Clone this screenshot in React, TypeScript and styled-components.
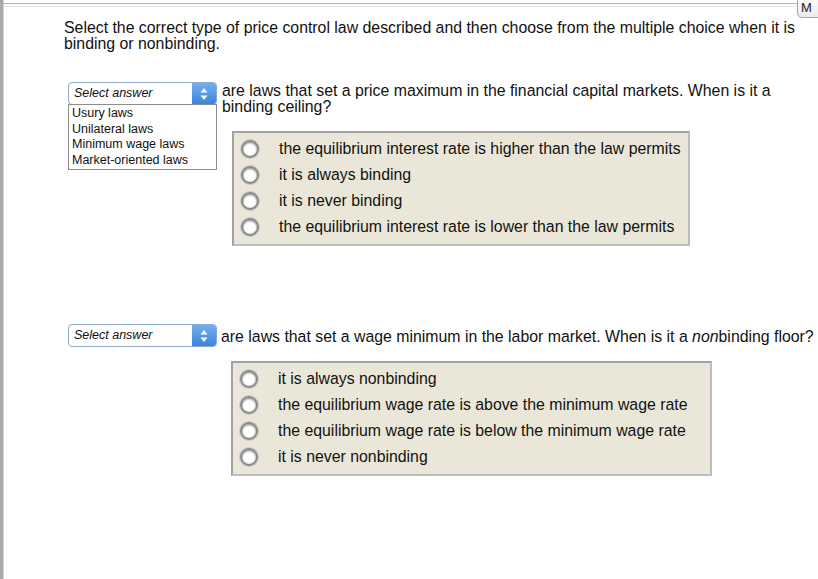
import React from "react";
import styled, { createGlobalStyle } from "styled-components";

const GlobalStyle = createGlobalStyle`
  html, body {
    margin: 0;
    padding: 0;
    background: #fff;
    font-family: "Liberation Sans", Arial, sans-serif;
    color: #111;
  }
`;

const Frame = styled.div`
  position: relative;
  width: 818px;
  height: 579px;
  box-sizing: border-box;
  border-left: 3px solid #a9a9a9;
  box-shadow: inset 1px 0 0 #d4d4d4;
  overflow: hidden;
  > .topline {
    height: 2px;
    margin-top: 3px;
    width: 797px;
    border-top: 1px solid #b5b5b5;
    border-bottom: 1px solid #e4e4e4;
  }
`;

const CornerButton = styled.div`
  position: absolute;
  top: -1px;
  right: -6px;
  width: 22px;
  height: 17px;
  border: 1px solid #a6a6a6;
  border-radius: 0 0 0 5px;
  background: linear-gradient(#fafafa, #ececec);
  font-size: 13px;
  line-height: 16px;
  padding-left: 3px;
  color: #222;
`;

const Intro = styled.p`
  margin: 13px 0 0 61px;
  font-size: 15.85px;
  line-height: 16px;
`;

const Question = styled.div<{ $top: number; $indent: number }>`
  display: flex;
  align-items: flex-start;
  margin: ${(p) => p.$top}px 0 0 ${(p) => p.$indent}px;
`;

const SelectWrap = styled.div`
  position: relative;
  flex: 0 0 149px;
`;

const SelectBox = styled.div`
  display: flex;
  height: 21px;
  border: 1px solid #8fa9c9;
  border-radius: 4px;
  background: #fff;
  overflow: hidden;
  > .label {
    flex: 1;
    font-size: 12.5px;
    font-style: italic;
    line-height: 21px;
    padding-left: 5px;
    color: #111;
  }
  > .arrow {
    width: 24px;
    background: linear-gradient(#72aef0, #3c84dc);
    display: flex;
    align-items: center;
    justify-content: center;
  }
`;

const DropList = styled.ul`
  position: absolute;
  top: 22px;
  left: 0;
  width: 147px;
  margin: 0;
  padding: 1px 0 1px;
  list-style: none;
  background: #fff;
  border: 1px solid #8c8c8c;
  > li {
    font-size: 12.5px;
    line-height: 15.6px;
    padding-left: 3px;
  }
`;

const Body = styled.div<{ $gap: number }>`
  flex: 1;
  padding-left: ${(p) => p.$gap}px;
`;

const Prompt = styled.div<{ $offset: number }>`
  font-size: 15.85px;
  line-height: 16px;
  margin-top: ${(p) => p.$offset}px;
  white-space: nowrap;
`;

const Choices = styled.div<{ $width: number }>`
  width: ${(p) => p.$width}px;
  margin: 16px 0 0 10px;
  box-sizing: border-box;
  background: #ebe7d8;
  border: 2px solid #a2a2a2;
  border-right-color: #bdbdbd;
  border-bottom-color: #bdbdbd;
  padding: 3px 0 4px 7px;
`;

const Choice = styled.div`
  display: flex;
  align-items: center;
  height: 26px;
  font-size: 15.85px;
  > .text {
    margin-left: 20px;
  }
`;

const Radio = styled.span`
  flex: 0 0 auto;
  width: 14px;
  height: 14px;
  border-radius: 50%;
  background: radial-gradient(circle at 50% 40%, #fff 55%, #eee 75%);
  border: 2px solid #8a8a8a;
  box-shadow: 0 0 0 1px #c8c8c8, inset 0 1px 2px #888;
`;

const Arrows = () => (
  <svg width="10" height="14" viewBox="0 0 10 14">
    <path d="M5 1 L8.5 5.5 L1.5 5.5 Z" fill="#fff" />
    <path d="M5 13 L8.5 8.5 L1.5 8.5 Z" fill="#fff" />
  </svg>
);

const Select: React.FC<{ open?: boolean; options?: string[] }> = ({
  open,
  options,
}) => (
  <SelectWrap>
    <SelectBox>
      <span className="label">Select answer</span>
      <span className="arrow">
        <Arrows />
      </span>
    </SelectBox>
    {open && options && (
      <DropList>
        {options.map((o) => (
          <li key={o}>{o}</li>
        ))}
      </DropList>
    )}
  </SelectWrap>
);

const laws = [
  "Usury laws",
  "Unilateral laws",
  "Minimum wage laws",
  "Market-oriented laws",
];

const q1 = [
  "the equilibrium interest rate is higher than the law permits",
  "it is always binding",
  "it is never binding",
  "the equilibrium interest rate is lower than the law permits",
];

const q2 = [
  "it is always nonbinding",
  "the equilibrium wage rate is above the minimum wage rate",
  "the equilibrium wage rate is below the minimum wage rate",
  "it is never nonbinding",
];

const ChoiceList: React.FC<{ items: string[]; width: number }> = ({
  items,
  width,
}) => (
  <Choices $width={width}>
    {items.map((t) => (
      <Choice key={t}>
        <Radio />
        <span className="text">{t}</span>
      </Choice>
    ))}
  </Choices>
);

export default function App() {
  return (
    <>
      <GlobalStyle />
      <Frame>
        <div className="topline" />
        <CornerButton>M</CornerButton>
        <Intro>
          Select the correct type of price control law described and then choose
          from the multiple choice when it is
          <br />
          binding or nonbinding.
        </Intro>
        <Question $top={30} $indent={65}>
          <Select open options={laws} />
          <Body $gap={5}>
            <Prompt $offset={1}>
              are laws that set a price maximum in the financial capital
              markets. When is it a
              <br />
              binding ceiling?
            </Prompt>
            <ChoiceList items={q1} width={458} />
          </Body>
        </Question>
        <Question $top={78} $indent={65}>
          <Select />
          <Body $gap={4}>
            <Prompt $offset={5}>
              are laws that set a wage minimum in the labor market. When is it a{" "}
              <i>non</i>binding floor?
            </Prompt>
            <ChoiceList items={q2} width={481} />
          </Body>
        </Question>
      </Frame>
    </>
  );
}
